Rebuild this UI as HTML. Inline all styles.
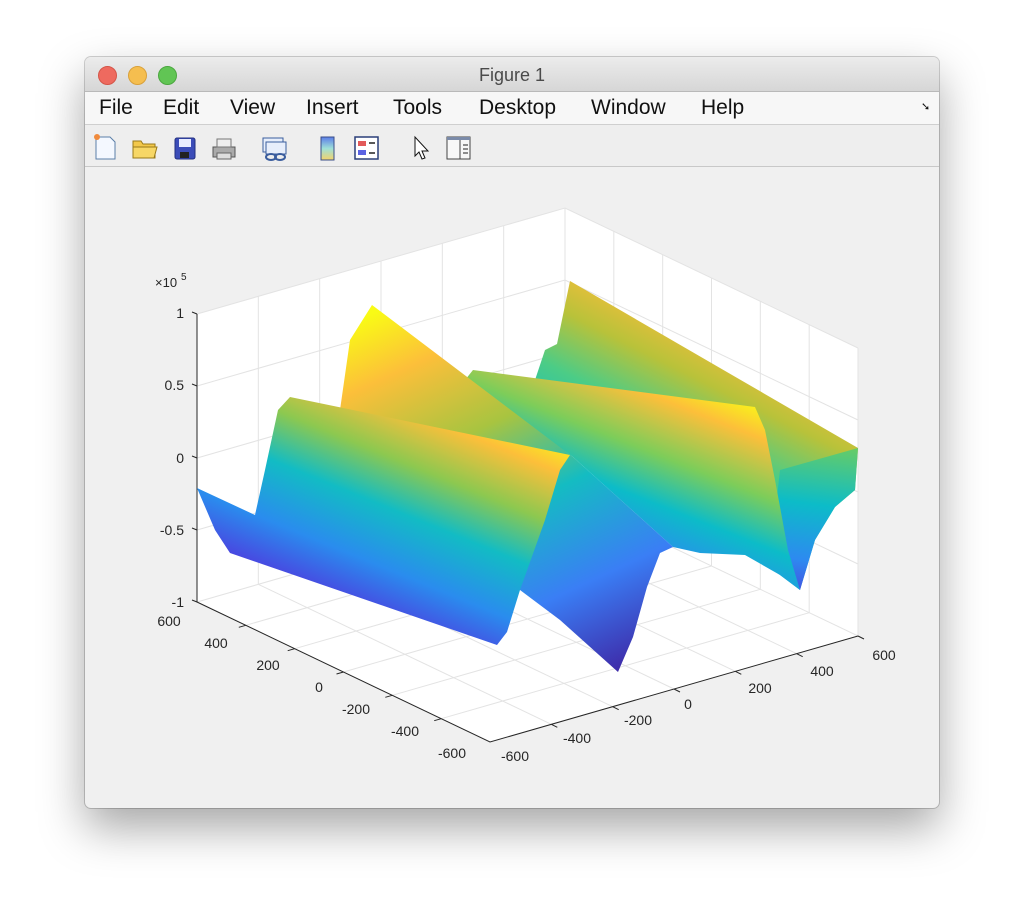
<!DOCTYPE html>
<html><head><meta charset="utf-8"><style>
html,body{margin:0;padding:0;width:1024px;height:922px;background:#fff;overflow:hidden;font-family:"Liberation Sans",sans-serif}
.win{position:absolute;left:85px;top:57px;width:854px;height:751px;border-radius:6px;background:#f0f0f0;box-shadow:0 20px 45px rgba(0,0,0,.35),0 0 0 1px rgba(0,0,0,.18);overflow:hidden}
.title{position:absolute;left:0;top:0;width:854px;height:34px;background:linear-gradient(#ececec,#d6d6d6);border-bottom:1px solid #b9b9b9;text-align:center;line-height:36px;font-size:18px;color:#4a4a4a}
.dot{position:absolute;top:9px;width:17px;height:17px;border-radius:50%}
.menu{position:absolute;left:0;top:35px;width:854px;height:32px;background:#f7f7f7;border-bottom:1px solid #cfcfcf}
.menu span{position:absolute;top:4px;font-size:21px;color:#111}
.tb{position:absolute;left:0;top:68px;width:854px;height:41px;background:#eeeeee;border-bottom:1px solid #c8c8c8}
</style></head><body>
<div class="win">
<div class="title">Figure 1
<div class="dot" style="left:13px;background:#ee6a5f;border:1px solid #d45548"></div>
<div class="dot" style="left:43px;background:#f5be4f;border:1px solid #d9a13a"></div>
<div class="dot" style="left:73px;background:#61c554;border:1px solid #4ba73f"></div>
</div>
<div class="menu">
<span style="left:14px">File</span><span style="left:78px">Edit</span><span style="left:145px">View</span><span style="left:221px">Insert</span><span style="left:308px">Tools</span><span style="left:394px">Desktop</span><span style="left:506px">Window</span><span style="left:616px">Help</span>
<span style="left:836px;top:8px;font-size:11px">➘</span>
</div>
<div class="tb">
<svg width="854" height="41" style="position:absolute;left:0;top:0">
<path d="M11 12h14l5 5v17H11z" fill="#f4f8ff" stroke="#5b7fa8"/><circle cx="12" cy="12" r="3" fill="#f08a3c"/>
<path d="M48 16h8l2 3h12v14H48z" fill="#f3c84a" stroke="#9a7a18"/><path d="M48 22h24l-3 11H48z" fill="#f7d766" stroke="#9a7a18"/>
<rect x="90" y="13" width="20" height="21" rx="2" fill="#3b4cb8" stroke="#222f80"/><rect x="94" y="14" width="12" height="8" fill="#e8ecff"/><rect x="95" y="27" width="9" height="6" fill="#222"/>
<path d="M128 22h22v10h-22z" fill="#aaa" stroke="#555"/><rect x="132" y="14" width="14" height="8" fill="#eee" stroke="#777"/><rect x="132" y="28" width="14" height="6" fill="#ddd" stroke="#666"/>
<rect x="178" y="13" width="20" height="14" fill="#e7eefb" stroke="#3a5d9e"/><rect x="181" y="17" width="20" height="12" fill="#e7eefb" stroke="#3a5d9e"/><ellipse cx="186" cy="32" rx="5" ry="3" fill="none" stroke="#3a5d9e" stroke-width="2"/><ellipse cx="195" cy="32" rx="5" ry="3" fill="none" stroke="#3a5d9e" stroke-width="2"/>
<defs><linearGradient id="cb" x1="0" y1="0" x2="0" y2="1"><stop offset="0" stop-color="#5b7de8"/><stop offset=".5" stop-color="#9fe0d8"/><stop offset="1" stop-color="#f4d36a"/></linearGradient></defs>
<rect x="236" y="12" width="13" height="23" fill="url(#cb)" stroke="#3a4f88"/>
<rect x="270" y="12" width="23" height="22" fill="#fff" stroke="#2a3f78" stroke-width="1.5"/><rect x="273" y="16" width="8" height="5" fill="#e25a5a"/><rect x="273" y="25" width="8" height="5" fill="#5a62e2"/><path d="M284 18h6M284 28h6" stroke="#222" stroke-width="1.5"/>
<path d="M330 12v19l4-4 3 7 3-1-3-7h6z" fill="#fff" stroke="#111"/>
<rect x="362" y="12" width="23" height="22" fill="#f8f8f8" stroke="#444"/><rect x="362" y="12" width="23" height="3" fill="#7a8aa8"/><path d="M375 15v19" stroke="#444"/><path d="M378 20h5M378 24h5M378 28h5" stroke="#222"/>
</svg>
</div>
</div>
<svg width="1024" height="922" style="position:absolute;left:0;top:0" font-family="Liberation Sans, sans-serif" font-size="14" fill="#262626">
<defs>
<linearGradient id="gF" gradientUnits="userSpaceOnUse" x1="550" y1="430" x2="460" y2="650"><stop offset="0" stop-color="#f9fb15"/><stop offset=".15" stop-color="#fcbf3a"/><stop offset=".36" stop-color="#8cc850"/><stop offset=".56" stop-color="#12bcc4"/><stop offset=".8" stop-color="#2a8cee"/><stop offset="1" stop-color="#4a44e0"/></linearGradient>
<linearGradient id="gM" gradientUnits="userSpaceOnUse" x1="400" y1="300" x2="580" y2="690"><stop offset="0" stop-color="#f9fb15"/><stop offset=".15" stop-color="#fcbf3a"/><stop offset=".35" stop-color="#a8c440"/><stop offset=".55" stop-color="#14bcc2"/><stop offset=".78" stop-color="#3a7ef5"/><stop offset="1" stop-color="#3e2aa8"/></linearGradient>
<linearGradient id="gS" gradientUnits="userSpaceOnUse" x1="745" y1="395" x2="660" y2="610"><stop offset="0" stop-color="#f9fb15"/><stop offset=".15" stop-color="#fcbf3a"/><stop offset=".38" stop-color="#7ccd5a"/><stop offset=".58" stop-color="#0cbcc8"/><stop offset=".8" stop-color="#2d8af0"/><stop offset="1" stop-color="#4a44e0"/></linearGradient>
<linearGradient id="gB" gradientUnits="userSpaceOnUse" x1="600" y1="270" x2="520" y2="430"><stop offset="0" stop-color="#fbbd3a"/><stop offset=".3" stop-color="#b8c23a"/><stop offset=".6" stop-color="#4ccc86"/><stop offset="1" stop-color="#0cbcc8"/></linearGradient>
<linearGradient id="gB2" gradientUnits="userSpaceOnUse" x1="820" y1="440" x2="800" y2="600"><stop offset="0" stop-color="#6ccd60"/><stop offset=".4" stop-color="#0cbcc8"/><stop offset=".75" stop-color="#2d8af0"/><stop offset="1" stop-color="#4a44e0"/></linearGradient>
</defs>
<polygon points="197,314 565,208 858,348 858,636 490,742 197,602" fill="#fff"/>
<g stroke="#e3e3e3" stroke-width="1" fill="none">
<path d="M197,602L565,496M245.8,625.3L613.8,519.3M294.7,648.7L662.7,542.7M343.5,672L711.5,566M392.3,695.3L760.3,589.3M441.2,718.7L809.2,612.7"/>
<path d="M551.3,724.3L258.3,584.3M612.7,706.7L319.7,566.7M674,689L381,549M735.3,671.3L442.3,531.3M796.7,653.7L503.7,513.7M858,636L565,496"/>
<path d="M258.3,584.3V296.3M319.7,566.7V278.7M381,549V261M442.3,531.3V243.3M503.7,513.7V225.7M565,496V208"/>
<path d="M613.8,519.3V231.3M662.7,542.7V254.7M711.5,566V278M760.3,589.3V301.3M809.2,612.7V324.7M858,636V348"/>
<path d="M197,530L565,424L858,564M197,458L565,352L858,492M197,386L565,280L858,420M197,314L565,208L858,348"/>
</g>
<g stroke="#262626" stroke-width="1" fill="none">
<path d="M197,314V602L490,742L858,636"/>
<path d="M197,314l-5,-2M197,386l-5,-2M197,458l-5,-2M197,530l-5,-2M197,602l-5,-2"/>
<path d="M245.8,625.3l-7,2M294.7,648.7l-7,2M343.5,672l-7,2M392.3,695.3l-7,2M441.2,718.7l-7,2"/>
<path d="M551.3,724.3l6,3M612.7,706.7l6,3M674,689l6,3M735.3,671.3l6,3M796.7,653.7l6,3M858,636l6,3"/>
</g>
<text x="155" y="287" font-size="13">×10</text><text x="181" y="280" font-size="10">5</text>
<g text-anchor="end"><text x="184" y="318">1</text><text x="184" y="390">0.5</text><text x="184" y="463">0</text><text x="184" y="535">-0.5</text><text x="184" y="607">-1</text></g>
<g text-anchor="middle">
<text x="169" y="626">600</text><text x="216" y="648">400</text><text x="268" y="670">200</text><text x="319" y="692">0</text><text x="356" y="714">-200</text><text x="405" y="736">-400</text><text x="452" y="758">-600</text>
<text x="515" y="761">-600</text><text x="577" y="743">-400</text><text x="638" y="725">-200</text><text x="688" y="709">0</text><text x="760" y="693">200</text><text x="822" y="676">400</text><text x="884" y="660">600</text>
</g>
<polygon points="535,380 545,350 557,344 570,281 858,448 855,490 835,507 815,540 800,590 760,560 540,380" fill="url(#gB)"/>
<polygon points="780,470 858,448 855,490 835,507 815,540 800,590 770,560" fill="url(#gB2)"/>
<polygon points="465,380 473,370 755,407 765,430 775,480 788,550 800,590 780,575 745,555 700,553 673,547 573,457" fill="url(#gS)"/>
<polygon points="340,410 350,340 372,305 573,457 673,547 660,553 647,587 633,637 618,672 560,620 400,500" fill="url(#gM)"/>
<polygon points="197,488 215,530 230,553 497,645 507,632 520,590 545,520 560,470 570,455 290,397 278,410 265,470 255,515" fill="url(#gF)"/>
</svg>
</body></html>
